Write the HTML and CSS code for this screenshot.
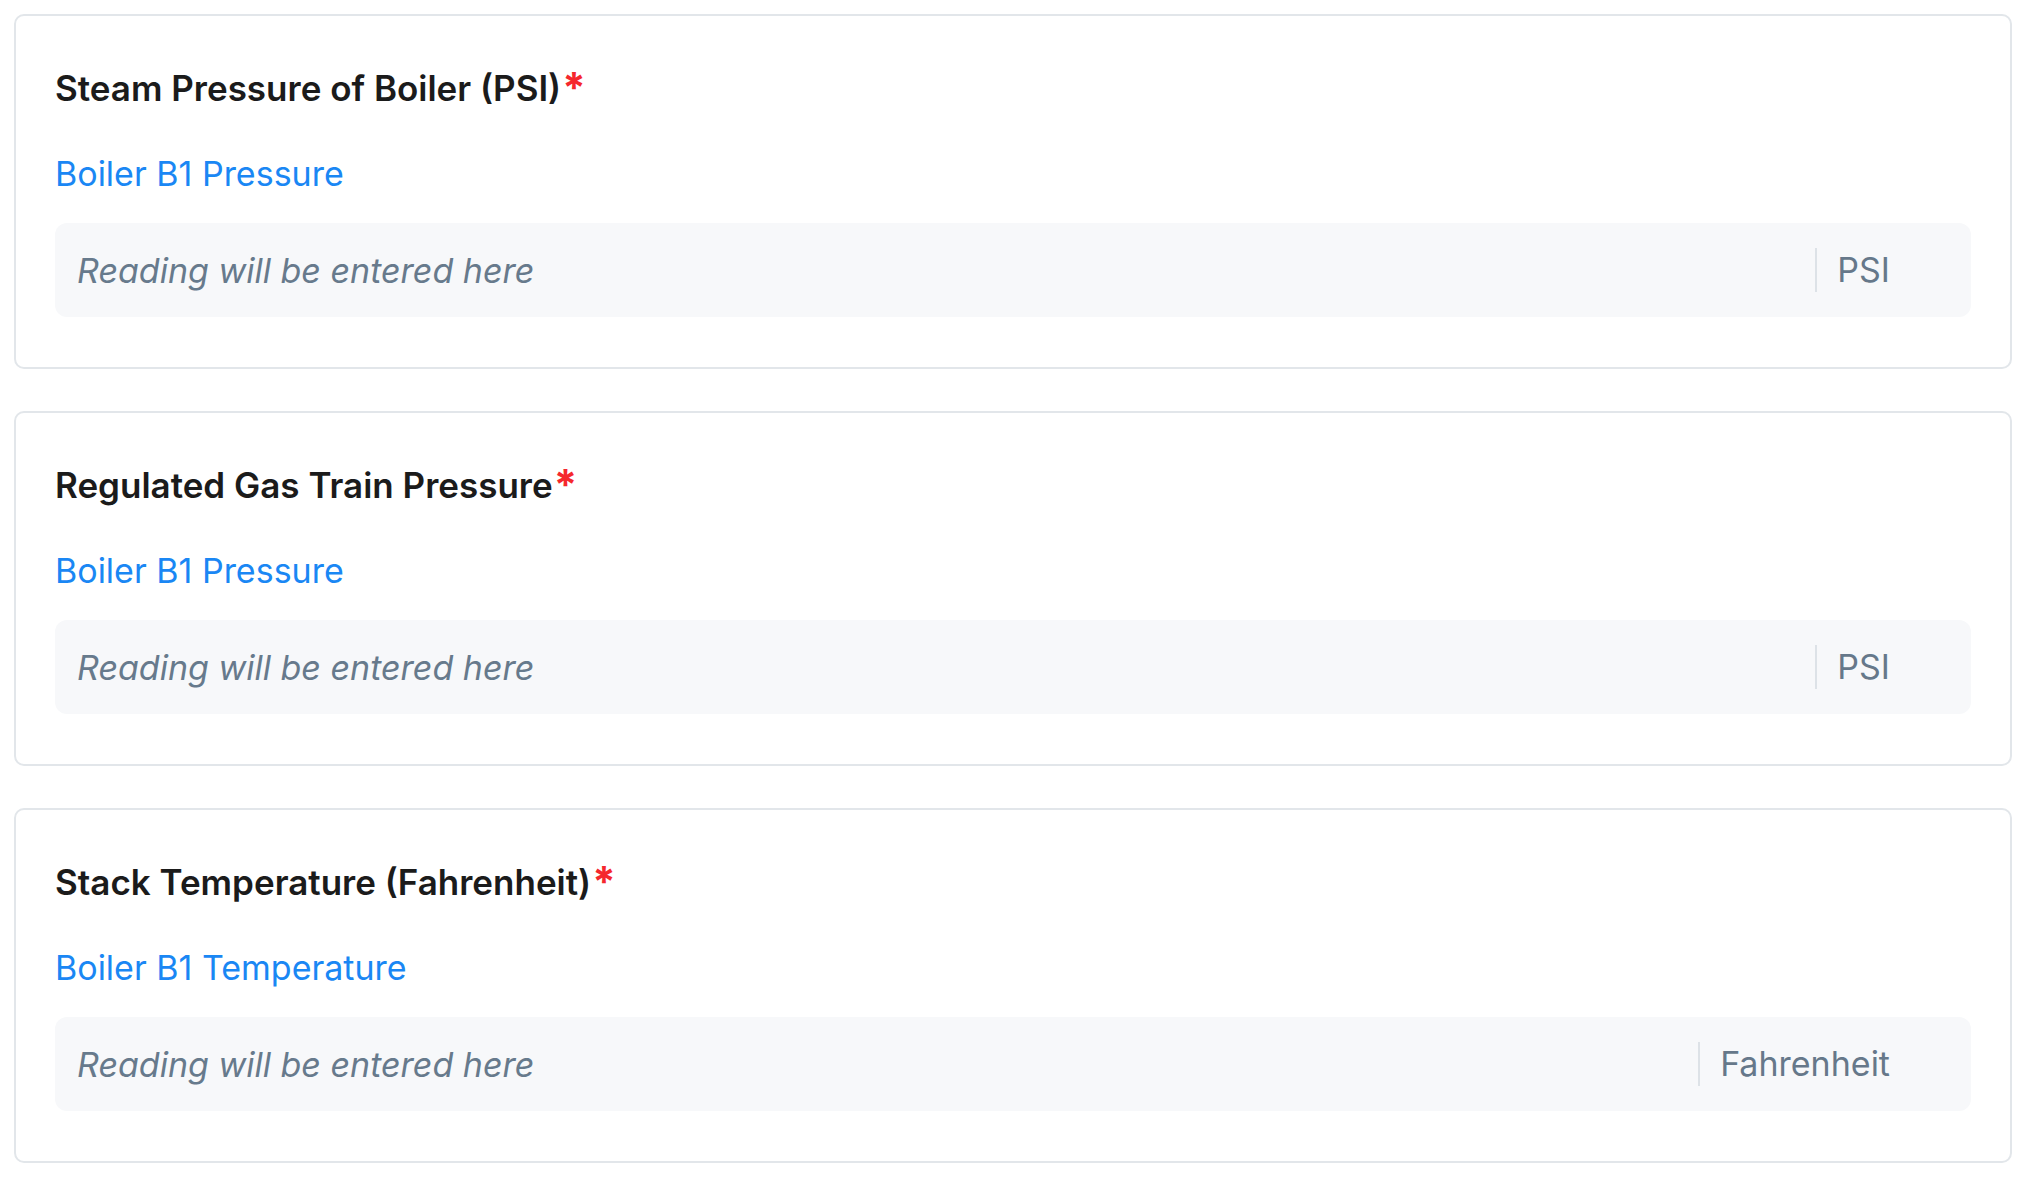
FILE: index.html
```html
<!DOCTYPE html>
<html>
<head>
<meta charset="utf-8">
<link rel="stylesheet" href="styles.css">
</head>
<body>
<div class="list">
  <section class="card">
    <h2 class="title">Steam Pressure of Boiler (PSI)<span class="req">*</span></h2>
    <div class="asset">Boiler B1 Pressure</div>
    <div class="field">
      <input class="reading" type="text" placeholder="Reading will be entered here">
      <span class="unit">PSI</span>
    </div>
  </section>
  <section class="card">
    <h2 class="title">Regulated Gas Train Pressure<span class="req">*</span></h2>
    <div class="asset">Boiler B1 Pressure</div>
    <div class="field">
      <input class="reading" type="text" placeholder="Reading will be entered here">
      <span class="unit">PSI</span>
    </div>
  </section>
  <section class="card">
    <h2 class="title">Stack Temperature (Fahrenheit)<span class="req">*</span></h2>
    <div class="asset">Boiler B1 Temperature</div>
    <div class="field">
      <input class="reading" type="text" placeholder="Reading will be entered here">
      <span class="unit">Fahrenheit</span>
    </div>
  </section>
</div>
</body>
</html>
```
FILE: styles.css
```css
html, body {
  margin: 0;
  padding: 0;
  background: #ffffff;
  font-family: Inter, "Noto Sans", "Liberation Sans", sans-serif;
}

.list {
  display: flex;
  flex-direction: column;
  gap: 42px;
  padding: 14px 16px 0 14px;
}

.card {
  border: 2px solid #e2e6ea;
  border-radius: 10px;
  padding: 47px 39px 50px 39px;
  display: flex;
  flex-direction: column;
  background: #ffffff;
}

.title {
  margin: 0;
  font-size: 35px;
  line-height: 51px;
  font-weight: 600;
  color: #1b1b1b;
}

.req {
  color: #f5282d;
  font-size: 42px;
  line-height: 0;
  vertical-align: -2px;
  font-weight: 700;
  margin-left: 1px;
}

.asset {
  margin-top: 34px;
  font-size: 34px;
  line-height: 51px;
  color: #1a87f4;
}

.field {
  margin-top: 24px;
  height: 94px;
  background: #f7f8fa;
  border-radius: 12px;
  display: flex;
  align-items: center;
}

.reading {
  flex: 1;
  min-width: 0;
  border: none;
  outline: none;
  background: transparent;
  padding: 0 0 0 22px;
  height: 100%;
  font-family: inherit;
  font-size: 34px;
  color: #1b1b1b;
}

.reading::placeholder {
  color: #677a8c;
  font-style: italic;
  opacity: 1;
}

.unit {
  border-left: 2px solid #dde2e7;
  line-height: 44px;
  padding: 0 81px 0 20px;
  font-size: 34px;
  color: #66788a;
}
```
